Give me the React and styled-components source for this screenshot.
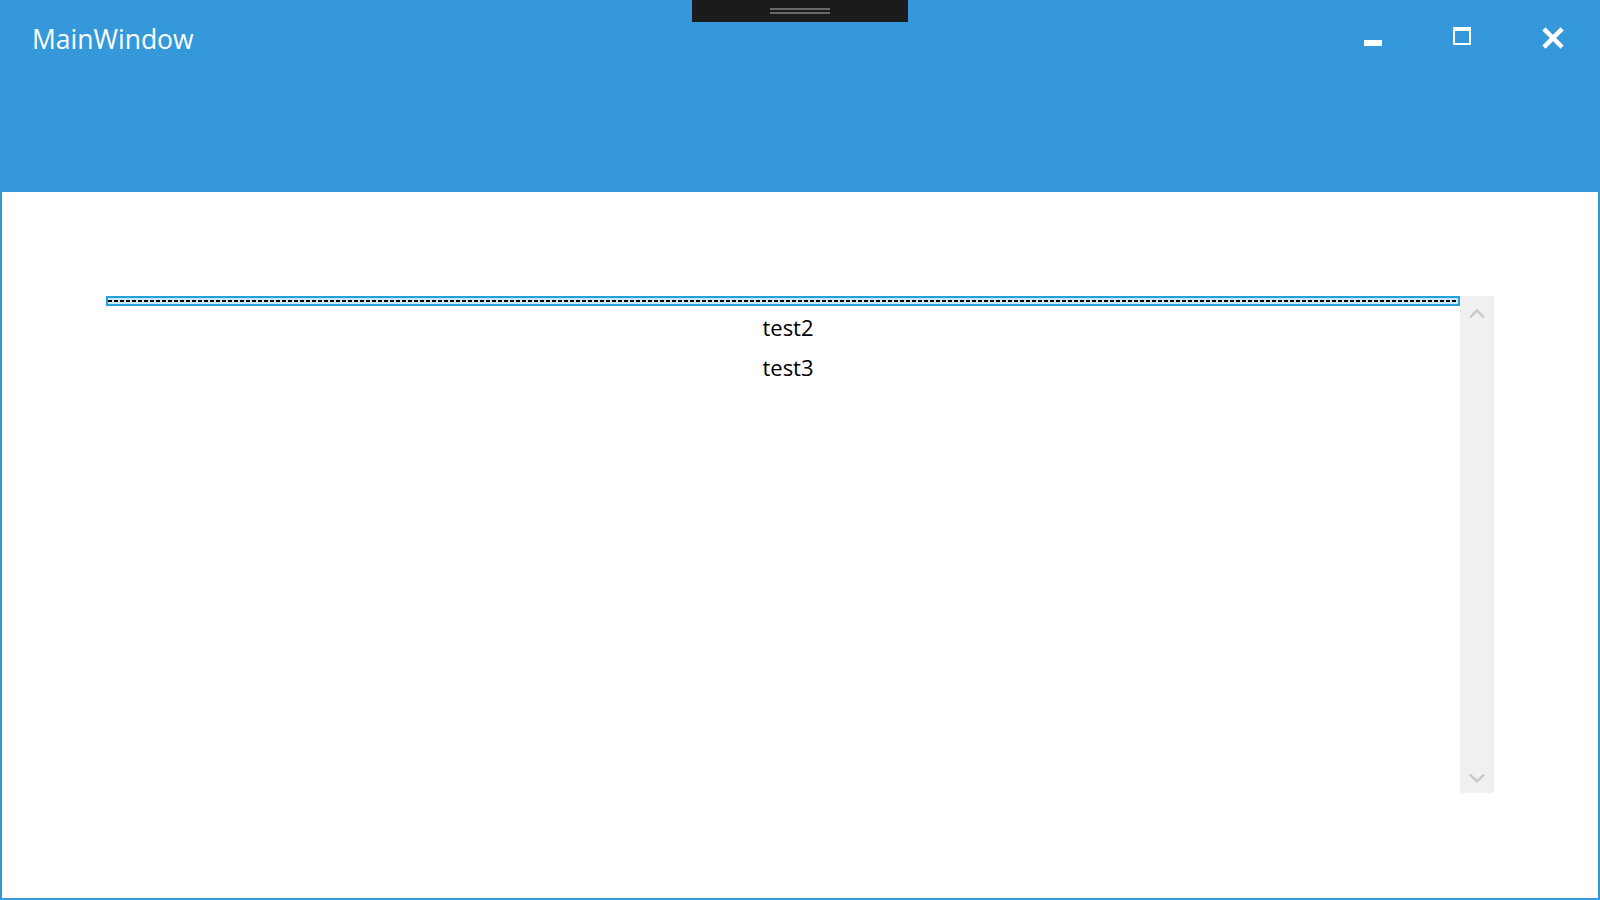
import React from 'react';
import styled, { createGlobalStyle } from 'styled-components';

const Global = createGlobalStyle`
  html, body {
    margin: 0;
    padding: 0;
    background: #ffffff;
    overflow: hidden;
  }
  * {
    box-sizing: border-box;
  }
`;

const Window = styled.div`
  position: relative;
  width: 1600px;
  height: 900px;
  border: 2px solid #3598db;
  display: flex;
  flex-direction: column;
  font-family: "Open Sans", "Noto Sans", sans-serif;
`;

const Header = styled.header`
  height: 190px;
  background: #3598db;
  display: flex;
  align-items: flex-start;
  justify-content: space-between;
  flex-shrink: 0;
`;

const Title = styled.div`
  color: #ffffff;
  font-size: 26.5px;
  line-height: 36px;
  padding: 19px 0 0 30px;
`;

const Controls = styled.div`
  display: flex;
`;

const ControlButton = styled.div`
  width: 90px;
  height: 60px;
  display: flex;
  justify-content: center;
  padding-top: 25px;
`;

const DragHandle = styled.div`
  position: absolute;
  top: -2px;
  left: 690px;
  width: 216px;
  height: 22px;
  background: #1b1b1b;
  display: flex;
  flex-direction: column;
  align-items: center;
  gap: 2px;
  padding-top: 8px;
`;

const HandleLine = styled.span`
  width: 60px;
  height: 2px;
  background: #6b6b6b;
`;

const Content = styled.main`
  flex: 1;
  padding: 104px 104px 105px 104px;
  display: flex;
`;

const ListBox = styled.div`
  flex: 1;
  display: flex;
`;

const Items = styled.div`
  flex: 1;
  display: flex;
  flex-direction: column;
`;

const FocusedItem = styled.div`
  height: 10px;
  border: 2px solid #26a0da;
  background: #cce8f7;
  padding-top: 2px;

  &::after {
    content: '';
    display: block;
    height: 2px;
    background: repeating-linear-gradient(90deg, #000 0 4px, transparent 4px 6px);
  }
`;

const Item = styled.div`
  font-size: 22px;
  line-height: 40px;
  color: #000000;
  text-align: center;
  padding-left: 10px;
  margin-top: ${({ $first }) => ($first ? 1 : 0)}px;
`;

const ScrollBar = styled.div`
  width: 34px;
  background: #f0f0f0;
  display: flex;
  flex-direction: column;
  justify-content: space-between;
  align-items: center;
  padding: 13px 0 10px;
`;

const Chevron = ({ down }) => (
  <svg width="16" height="10" viewBox="0 0 16 10">
    <polyline
      points={down ? '1,1.5 8,8.5 15,1.5' : '1,8.5 8,1.5 15,8.5'}
      fill="none"
      stroke="#c6c6c6"
      strokeWidth="2.4"
    />
  </svg>
);

const MinimizeIcon = () => (
  <svg width="20" height="20" viewBox="0 0 20 20">
    <rect x="1" y="13" width="18" height="6" fill="#fff" />
  </svg>
);

const MaximizeIcon = () => (
  <svg width="20" height="20" viewBox="0 0 20 20">
    <rect x="0" y="0" width="18" height="18" fill="#fff" />
    <rect x="2" y="4" width="14" height="12" fill="#3598db" />
  </svg>
);

const CloseIcon = () => (
  <svg width="22" height="22" viewBox="0 0 22 22">
    <path d="M3.5 3.5 L18.5 18.5 M18.5 3.5 L3.5 18.5" stroke="#fff" strokeWidth="4.5" strokeLinecap="square" />
  </svg>
);

export default function App() {
  return (
    <>
      <Global />
      <Window>
        <Header>
          <Title>MainWindow</Title>
          <Controls>
            <ControlButton>
              <MinimizeIcon />
            </ControlButton>
            <ControlButton>
              <MaximizeIcon />
            </ControlButton>
            <ControlButton>
              <CloseIcon />
            </ControlButton>
          </Controls>
        </Header>
        <DragHandle>
          <HandleLine />
          <HandleLine />
        </DragHandle>
        <Content>
          <ListBox>
            <Items>
              <FocusedItem />
              <Item $first>test2</Item>
              <Item>test3</Item>
            </Items>
            <ScrollBar>
              <Chevron />
              <Chevron down />
            </ScrollBar>
          </ListBox>
        </Content>
      </Window>
    </>
  );
}
